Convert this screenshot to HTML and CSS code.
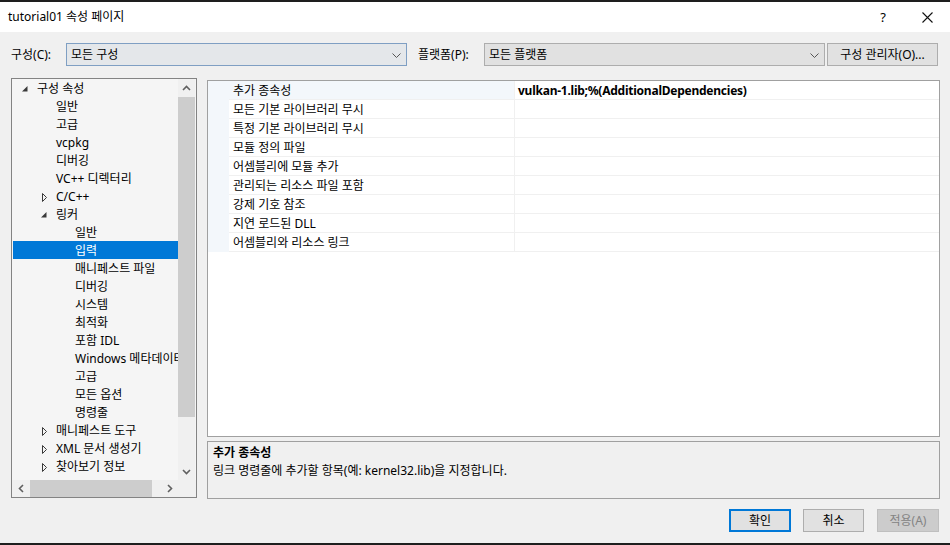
FILE: index.html
```html
<!DOCTYPE html>
<html lang="ko">
<head>
<meta charset="utf-8">
<title>tutorial01 속성 페이지</title>
<link rel="stylesheet" href="styles.css">
</head>
<body>
<div class="window">
  <div class="edge"></div>
  <div class="titlebar">
    <span class="title">tutorial01 속성 페이지</span>
    <span class="help">?</span>
    <span class="close"><svg width="11" height="11" viewBox="0 0 11 11"><path d="M0.5 0.5L10.5 10.5M10.5 0.5L0.5 10.5" stroke="#111" stroke-width="1.1" fill="none"/></svg></span>
  </div>
  <div class="body">
    <div class="config">
      <span class="lbl lbl-c">구성(C):</span>
      <div class="combo combo-focus"><span class="ctext">모든 구성</span><svg class="chev" width="9" height="5" viewBox="0 0 9 5"><path d="M0.5 0.5L4.5 4.5L8.5 0.5" stroke="#555" stroke-width="1" fill="none"/></svg></div>
      <span class="lbl lbl-p">플랫폼(P):</span>
      <div class="combo"><span class="ctext">모든 플랫폼</span><svg class="chev" width="9" height="5" viewBox="0 0 9 5"><path d="M0.5 0.5L4.5 4.5L8.5 0.5" stroke="#555" stroke-width="1" fill="none"/></svg></div>
      <div class="btn btn-mgr">구성 관리자(O)...</div>
    </div>
    <div class="main">
      <div class="tree">
        <div class="tree-top">
          <div class="list">
            <div class="node l0"><span class="tog"><svg class="exp" width="6" height="6" viewBox="0 0 6 6"><polygon points="5.5,0 5.5,5.5 0,5.5" fill="#3a3a3a"/></svg></span>구성 속성</div>
            <div class="node l1"><span class="tog"></span>일반</div>
            <div class="node l1"><span class="tog"></span>고급</div>
            <div class="node l1"><span class="tog"></span>vcpkg</div>
            <div class="node l1"><span class="tog"></span>디버깅</div>
            <div class="node l1"><span class="tog"></span>VC++ 디렉터리</div>
            <div class="node l1"><span class="tog"><svg class="col" width="6" height="9" viewBox="0 0 6 9"><polygon points="0.5,0.5 4.5,4.5 0.5,8.5" fill="none" stroke="#3a3a3a" stroke-width="1"/></svg></span>C/C++</div>
            <div class="node l1"><span class="tog"><svg class="exp" width="6" height="6" viewBox="0 0 6 6"><polygon points="5.5,0 5.5,5.5 0,5.5" fill="#3a3a3a"/></svg></span>링커</div>
            <div class="node l2"><span class="tog"></span>일반</div>
            <div class="node l2 sel"><span class="tog"></span>입력</div>
            <div class="node l2"><span class="tog"></span>매니페스트 파일</div>
            <div class="node l2"><span class="tog"></span>디버깅</div>
            <div class="node l2"><span class="tog"></span>시스템</div>
            <div class="node l2"><span class="tog"></span>최적화</div>
            <div class="node l2"><span class="tog"></span>포함 IDL</div>
            <div class="node l2"><span class="tog"></span>Windows 메타데이터</div>
            <div class="node l2"><span class="tog"></span>고급</div>
            <div class="node l2"><span class="tog"></span>모든 옵션</div>
            <div class="node l2"><span class="tog"></span>명령줄</div>
            <div class="node l1"><span class="tog"><svg class="col" width="6" height="9" viewBox="0 0 6 9"><polygon points="0.5,0.5 4.5,4.5 0.5,8.5" fill="none" stroke="#3a3a3a" stroke-width="1"/></svg></span>매니페스트 도구</div>
            <div class="node l1"><span class="tog"><svg class="col" width="6" height="9" viewBox="0 0 6 9"><polygon points="0.5,0.5 4.5,4.5 0.5,8.5" fill="none" stroke="#3a3a3a" stroke-width="1"/></svg></span>XML 문서 생성기</div>
            <div class="node l1"><span class="tog"><svg class="col" width="6" height="9" viewBox="0 0 6 9"><polygon points="0.5,0.5 4.5,4.5 0.5,8.5" fill="none" stroke="#3a3a3a" stroke-width="1"/></svg></span>찾아보기 정보</div>
          </div>
          <div class="vscroll">
            <div class="sarrow"><svg width="9" height="6" viewBox="0 0 9 6"><path d="M1 5L4.5 1.5L8 5" stroke="#606060" stroke-width="1.6" fill="none"/></svg></div>
            <div class="vtrack"><div class="vthumb"></div></div>
            <div class="sarrow"><svg width="9" height="6" viewBox="0 0 9 6"><path d="M1 1L4.5 4.5L8 1" stroke="#606060" stroke-width="1.6" fill="none"/></svg></div>
          </div>
        </div>
        <div class="hscroll">
          <div class="sarrow-h"><svg width="6" height="9" viewBox="0 0 6 9"><path d="M5 1L1.5 4.5L5 8" stroke="#606060" stroke-width="1.6" fill="none"/></svg></div>
          <div class="htrack"><div class="hthumb"></div></div>
          <div class="sarrow-h"><svg width="6" height="9" viewBox="0 0 6 9"><path d="M1 1L4.5 4.5L1 8" stroke="#606060" stroke-width="1.6" fill="none"/></svg></div>
          <div class="corner"></div>
        </div>
      </div>
      <div class="right">
        <div class="grid">
          <div class="prow active"><span class="mcell"></span><span class="pname">추가 종속성</span><span class="pval">vulkan-1.lib;%(AdditionalDependencies)</span></div>
          <div class="prow"><span class="mcell"></span><span class="pname">모든 기본 라이브러리 무시</span><span class="pval"></span></div>
          <div class="prow"><span class="mcell"></span><span class="pname">특정 기본 라이브러리 무시</span><span class="pval"></span></div>
          <div class="prow"><span class="mcell"></span><span class="pname">모듈 정의 파일</span><span class="pval"></span></div>
          <div class="prow"><span class="mcell"></span><span class="pname">어셈블리에 모듈 추가</span><span class="pval"></span></div>
          <div class="prow"><span class="mcell"></span><span class="pname">관리되는 리소스 파일 포함</span><span class="pval"></span></div>
          <div class="prow"><span class="mcell"></span><span class="pname">강제 기호 참조</span><span class="pval"></span></div>
          <div class="prow"><span class="mcell"></span><span class="pname">지연 로드된 DLL</span><span class="pval"></span></div>
          <div class="prow"><span class="mcell"></span><span class="pname">어셈블리와 리소스 링크</span><span class="pval"></span></div>
        </div>
        <div class="desc">
          <div class="dtitle">추가 종속성</div>
          <div class="dtext">링크 명령줄에 추가할 항목(예: kernel32.lib)을 지정합니다.</div>
        </div>
      </div>
    </div>
    <div class="buttons">
      <div class="btn btn-ok">확인</div>
      <div class="btn btn-cancel">취소</div>
      <div class="btn btn-apply">적용(A)</div>
    </div>
  </div>
  <div class="edge"></div>
</div>
</body>
</html>
```

FILE: styles.css
```css
* { box-sizing: border-box; }
html, body { margin: 0; padding: 0; }
body {
  width: 950px;
  height: 545px;
  overflow: hidden;
  font-family: "Noto Sans", "Noto Sans CJK KR", sans-serif;
  font-size: 12px;
  color: #000;
  background: #f0f0f0;
}
.window {
  width: 950px;
  height: 545px;
  display: flex;
  flex-direction: column;
}
.edge {
  height: 2px;
  background: #1e1e1e;
  flex: none;
}
.titlebar {
  height: 30px;
  background: #fff;
  display: flex;
  align-items: center;
  flex: none;
}
.title {
  margin-left: 8px;
  line-height: 16px;
  flex: 1;
}
.help {
  width: 14px;
  text-align: center;
  margin-right: 32px;
  font-size: 13px;
}
.close {
  width: 11px;
  height: 11px;
  margin-right: 17px;
  display: flex;
}
.body {
  flex: 1;
  display: flex;
  flex-direction: column;
  padding: 11px 10px 11px 11px;
}
.config {
  height: 23px;
  display: flex;
  align-items: center;
  flex: none;
}
.lbl { line-height: 16px; white-space: nowrap; padding-top: 1px; }
.lbl-c { width: 55px; }
.lbl-p { width: 66px; margin-left: 11px; }
.combo {
  width: 341px;
  height: 23px;
  border: 1px solid #adadad;
  background: #e1e1e1;
  display: flex;
  align-items: center;
  padding-left: 4px;
  padding-right: 5px;
}
.combo-focus {
  border-color: #7f9fc3;
  background: #e4e7ea;
}
.ctext { flex: 1; line-height: 16px; padding-top: 1px; }
.chev { flex: none; margin-top: 1px; }
.btn {
  height: 23px;
  border: 1px solid #adadad;
  background: #e1e1e1;
  display: flex;
  align-items: center;
  justify-content: center;
  line-height: 16px;
  padding-top: 1px;
  white-space: nowrap;
}
.btn-mgr { width: 111px; margin-left: 2px; }

.main {
  margin-top: 12px;
  height: 421px;
  display: flex;
  flex: none;
}
.tree {
  width: 186px;
  height: 420px;
  border: 1px solid #838383;
  display: flex;
  flex-direction: column;
  background: #f5f5f5;
}
.tree-top {
  flex: 1;
  display: flex;
  min-height: 0;
}
.list {
  width: 166px;
  overflow: hidden;
  padding-left: 1px;
}
.node {
  height: 18px;
  line-height: 16px;
  padding-top: 2px;
  display: flex;
  align-items: flex-start;
  white-space: nowrap;
  color: #000;
}
.node.l0 { padding-left: 8px; }
.node.l1 { padding-left: 27px; }
.node.l2 { padding-left: 46px; }
.tog {
  width: 16px;
  flex: none;
  height: 16px;
  display: flex;
  align-items: center;
}
.tog .exp { margin-left: 1px; margin-top: 0; }
.tog .col { margin-left: 2px; margin-top: 0; }
.node.sel {
  background: #0078d7;
  color: #fff;
}
.vscroll {
  width: 17px;
  background: #f0f0f0;
  display: flex;
  flex-direction: column;
}
.sarrow {
  height: 17px;
  display: flex;
  align-items: center;
  justify-content: center;
  flex: none;
}
.vtrack {
  flex: 1;
  padding-top: 1px;
}
.vthumb {
  height: 320px;
  background: #cdcdcd;
}
.hscroll {
  height: 17px;
  display: flex;
  background: #f0f0f0;
  flex: none;
}
.sarrow-h {
  width: 17px;
  display: flex;
  align-items: center;
  justify-content: center;
  flex: none;
}
.htrack {
  width: 132px;
  padding-left: 1px;
  display: flex;
}
.hthumb {
  width: 122px;
  background: #cdcdcd;
}
.corner { width: 17px; background: #f0f0f0; }

.right {
  margin-left: 10px;
  width: 733px;
  padding-top: 2px;
  display: flex;
  flex-direction: column;
  gap: 4px;
}
.grid {
  height: 357px;
  border: 1px solid #a0a0a0;
  background: #fff;
}
.prow {
  display: grid;
  grid-template-columns: 21px 285px 1fr;
  height: 19px;
}
.mcell { background: #f3f7fb; }
.pname, .pval {
  border-bottom: 1px solid #f0f0f0;
  line-height: 16px;
  padding-top: 2px;
  white-space: nowrap;
  overflow: hidden;
}
.pname { padding-left: 4px; }
.pval {
  border-left: 1px solid #f0f0f0;
  padding-left: 3px;
  font-weight: bold;
  letter-spacing: -0.24px;
}
.prow.active .pname { background: #f3f7fb; }
.desc {
  height: 58px;
  border: 1px solid #a0a0a0;
  background: #f0f0f0;
  padding: 2px 5px;
}
.dtitle { font-weight: bold; line-height: 18px; }
.dtext { line-height: 18px; }

.buttons {
  margin-top: 10px;
  display: flex;
  justify-content: flex-end;
  padding-right: 1px;
  flex: none;
}
.btn-ok {
  width: 62px;
  border: 2px solid #0078d7;
}
.btn-cancel { width: 61px; margin-left: 12px; }
.btn-apply {
  width: 62px;
  margin-left: 13px;
  background: #cccccc;
  border-color: #bfbfbf;
  color: #838383;
}
```
